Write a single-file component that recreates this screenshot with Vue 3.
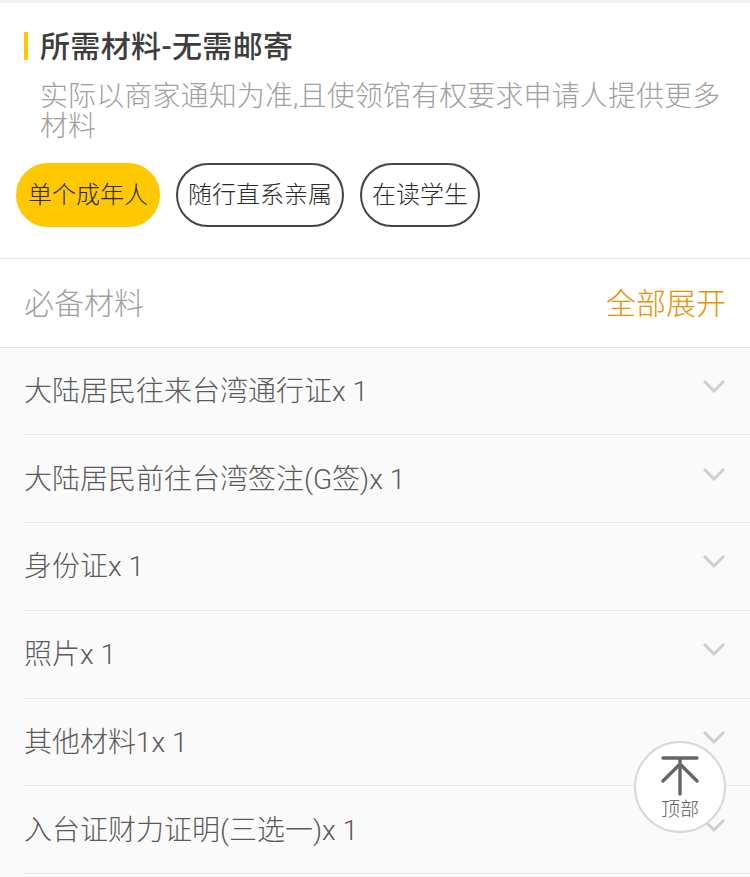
<template>
  <div class="page">
    <div class="head">
      <h2 class="title">所需材料-无需邮寄</h2>
      <p class="desc">实际以商家通知为准,且使领馆有权要求申请人提供更多材料</p>
      <div class="tabs">
        <span
          v-for="(tab, i) in tabs"
          :key="tab"
          :class="['tab', { active: i === 0 }]"
        >{{ tab }}</span>
      </div>
    </div>
    <div class="section">
      <span class="section-name">必备材料</span>
      <span class="section-more">全部展开</span>
    </div>
    <ul class="list">
      <li v-for="item in items" :key="item" class="row">
        <span class="row-text">{{ item }}</span>
        <svg class="arrow" width="24" height="14" viewBox="0 0 24 14">
          <path d="M2 2 L12 12 L22 2" fill="none" stroke="#cfcfcf" stroke-width="3" />
        </svg>
      </li>
    </ul>
    <div class="to-top">
      <svg width="38" height="40" viewBox="0 0 38 40">
        <path d="M2 2 H36 M19 4 V38 M2 25 L19 8 L36 25" fill="none" stroke="#666" stroke-width="3.4" stroke-linecap="round" />
      </svg>
      <span class="to-top-text">顶部</span>
    </div>
  </div>
</template>

<script setup>
const tabs = ["单个成年人", "随行直系亲属", "在读学生"];

const items = [
  "大陆居民往来台湾通行证x 1",
  "大陆居民前往台湾签注(G签)x 1",
  "身份证x 1",
  "照片x 1",
  "其他材料1x 1",
  "入台证财力证明(三选一)x 1",
];
</script>

<style>
html,
body {
  margin: 0;
  background: #fff;
}
</style>

<style scoped>
.page {
  position: relative;
  height: 877px;
  overflow: hidden;
  border-top: 3px solid #f2f2f4;
  box-sizing: border-box;
  font-family: Roboto, "Noto Sans CJK SC", sans-serif;
  font-weight: 300;
  background: #fff;
}
.head {
  padding: 29px 0 31px 16px;
  border-bottom: 1px solid #e3e3e3;
}
.title {
  margin: 0 0 0 8px;
  padding-left: 12px;
  border-left: 4px solid #ffc800;
  height: 28px;
  line-height: 30px;
  font-size: 30px;
  font-weight: 500;
  letter-spacing: 0.35px;
  color: #3d3d3d;
}
.desc {
  margin: 22px 28px 0 24px;
  font-size: 28px;
  line-height: 30px;
  letter-spacing: 0.12px;
  color: #a0a0a0;
}
.tabs {
  display: flex;
  gap: 16px;
  margin-top: 21px;
}
.tab {
  height: 64px;
  box-sizing: border-box;
  padding: 0 10px;
  border: 2px solid #444;
  border-radius: 32px;
  font-size: 24px;
  line-height: 60px;
  color: #2b2b2b;
}
.tab.active {
  background: #ffc800;
  border-color: #ffc800;
}
.section {
  display: flex;
  justify-content: space-between;
  align-items: center;
  height: 89px;
  padding: 0 24px 5px 24px;
  font-size: 30px;
  border-bottom: 1px solid #e3e3e3;
  box-sizing: border-box;
}
.section-name {
  color: #a0a0a0;
}
.section-more {
  color: #e5920a;
}
.list {
  margin: 0;
  padding: 0 0 0 24px;
  list-style: none;
  background: #fafafa;
  height: 600px;
}
.row {
  display: flex;
  justify-content: space-between;
  align-items: center;
  height: 87.75px;
  box-sizing: border-box;
  padding-right: 24px;
  border-bottom: 1px solid #e3e3e3;
  position: relative;
  top: -0.5px;
}
.row-text {
  font-size: 28px;
  color: #5a5a5a;
  margin-bottom: 4px;
}
.arrow {
  margin-top: -10px;
}
.to-top {
  position: absolute;
  left: 634px;
  top: 738px;
  width: 92px;
  height: 92px;
  box-sizing: border-box;
  border: 2px solid #d8d8d8;
  border-radius: 50%;
  background: #fff;
  display: flex;
  flex-direction: column;
  align-items: center;
  padding-top: 13px;
}
.to-top-text {
  font-size: 19px;
  line-height: 22px;
  margin-top: 3px;
  color: #5a5a5a;
}
</style>
